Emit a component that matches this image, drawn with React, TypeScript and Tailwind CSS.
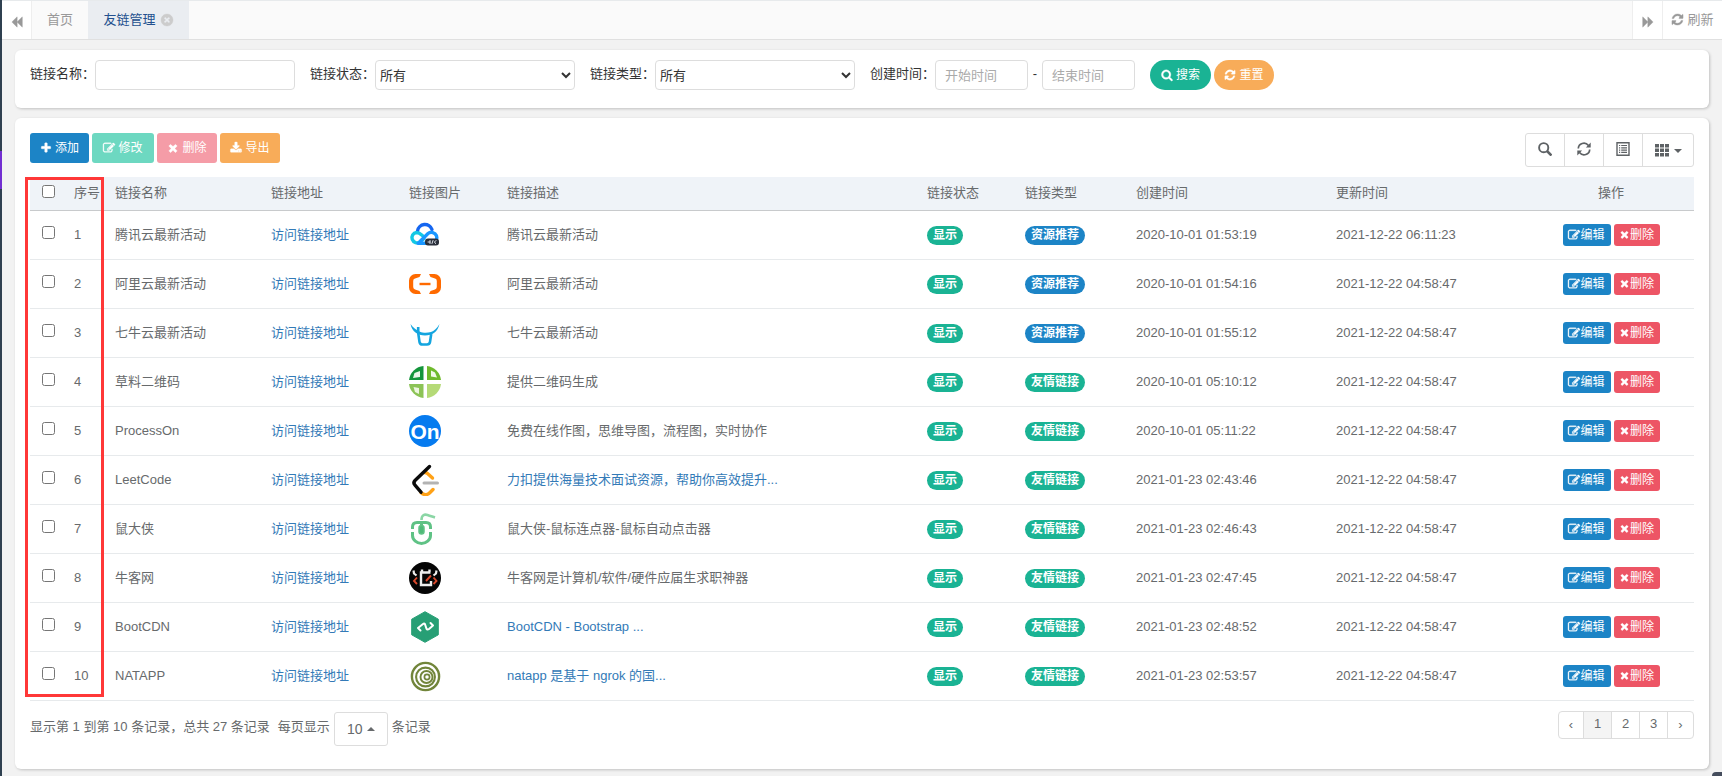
import { useState } from "react";

const FA = {
  edit: "M888 1184l116-116-152-152-116 116v56h96v96h56zm440-720q-16-16-33 1l-350 350q-17 17-1 33t33-1l350-350q17-17 1-33zm80 594v190q0 119-84.5 203.5t-203.5 84.5h-832q-119 0-203.5-84.5t-84.5-203.5v-832q0-119 84.5-203.5t203.5-84.5h832q63 0 117 25 15 7 18 23 3 17-9 29l-49 49q-14 14-32 8-23-6-45-6h-832q-66 0-113 47t-47 113v832q0 66 47 113t113 47h832q66 0 113-47t47-113v-126q0-13 9-22l64-64q15-15 35-7t20 29zm-96-738l288 288-672 672h-288v-288zm444 132l-92 92-288-288 92-92q28-28 68-28t68 28l152 152q28 28 28 68t-28 68z",
  times: "M1490 1322q0 40-28 68l-136 136q-28 28-68 28t-68-28l-294-294-294 294q-28 28-68 28t-68-28l-136-136q-28-28-28-68t28-68l294-294-294-294q-28-28-28-68t28-68l136-136q28-28 68-28t68 28l294 294 294-294q28-28 68-28t68 28l136 136q28 28 28 68t-28 68l-294 294 294 294q28 28 28 68z",
  plus: "M1600 736v192q0 40-28 68t-68 28h-416v416q0 40-28 68t-68 28h-192q-40 0-68-28t-28-68v-416h-416q-40 0-68-28t-28-68v-192q0-40 28-68t68-28h416v-416q0-40 28-68t68-28h192q40 0 68 28t28 68v416h416q40 0 68 28t28 68z",
  refresh: "M1639 1056q0 5-1 7-64 268-268 434.5t-478 166.5q-146 0-282.5-55t-243.5-157l-129 129q-19 19-45 19t-45-19-19-45v-448q0-26 19-45t45-19h448q26 0 45 19t19 45-19 45l-137 137q71 66 161 102t187 36q134 0 250-65t186-179q11-17 53-117 8-23 30-23h192q13 0 22.5 9.5t9.5 22.5zm25-800v448q0 26-19 45t-45 19h-448q-26 0-45-19t-19-45 19-45l138-138q-148-137-349-137-134 0-250 65t-186 179q-11 17-53 117-8 23-30 23h-199q-13 0-22.5-9.5t-9.5-22.5v-7q65-268 270-434.5t480-166.5q146 0 284 55.5t245 156.5l130-129q19-19 45-19t45 19 19 45z",
  search: "M1216 832q0-185-131.5-316.5t-316.5-131.5-316.5 131.5-131.5 316.5 131.5 316.5 316.5 131.5 316.5-131.5 131.5-316.5zm512 832q0 52-38 90t-90 38q-54 0-90-38l-343-342q-179 124-399 124-143 0-273.5-55.5t-225-150-150-225-55.5-273.5 55.5-273.5 150-225 225-150 273.5-55.5 273.5 55.5 225 150 150 225 55.5 273.5q0 220-124 399l343 343q37 37 37 90z",
  download: "M1344 1344q0-26-19-45t-45-19-45 19-19 45 19 45 45 19 45-19 19-45zm256 0q0-26-19-45t-45-19-45 19-19 45 19 45 45 19 45-19 19-45zm128-224v320q0 40-28 68t-68 28h-1472q-40 0-68-28t-28-68v-320q0-40 28-68t68-28h465l135 136q58 56 136 56t136-56l136-136h464q40 0 68 28t28 68zm-325-569q17 41-14 70l-448 448q-18 19-45 19t-45-19l-448-448q-31-29-14-70 17-39 59-39h256v-448q0-26 19-45t45-19h256q26 0 45 19t19 45v448h256q42 0 59 39z",
  timesCircle: "M1277 1122q0-26-19-45l-181-181 181-181q19-19 19-45 0-27-19-46l-90-90q-19-19-46-19-26 0-45 19l-181 181-181-181q-19-19-45-19-27 0-46 19l-90 90q-19 19-19 46 0 26 19 45l181 181-181 181q-19 19-19 45 0 27 19 46l90 90q19 19 46 19 26 0 45-19l181-181 181 181q19 19 45 19 27 0 46-19l90-90q19-19 19-46zm387-226q0 209-103 385.5t-279.5 279.5-385.5 103-385.5-103-279.5-279.5-103-385.5 103-385.5 279.5-279.5 385.5-103 385.5 103 279.5 279.5 103 385.5z",
  backward: "M1650 140q19-19 32-13t13 32v1472q0 26-13 32t-32-13l-710-710q-9-9-13-19v710q0 26-13 32t-32-13l-710-710q-19-19-19-45t19-45l710-710q19-19 32-13t13 32v710q4-10 13-19z",
};

function Icon({ name, className = "size-3" }: { name: keyof typeof FA; className?: string }) {
  return (
    <svg viewBox="0 0 1792 1792" fill="currentColor" stroke="currentColor" strokeWidth="50" aria-hidden="true" className={`shrink-0 overflow-visible ${className}`}>
      <path d={FA[name]} />
    </svg>
  );
}

const logos: Record<string, React.ReactNode> = {
  tencent: (
    <g fill="none" strokeWidth="3.4" strokeLinecap="round">
      <path d="M8.500 12a7.500 7.500 0 0 1 14.500-1.500" stroke="#1566f0" />
      <path d="M15 19.500l-4 3.500a5.200 5.200 0 1 1-3.500-9.500c3 0 4.500 2 7 4" stroke="#13c8e4" />
      <path d="M9 24.300h14a5.500 5.500 0 1 0-4-9.800l-8 8" stroke="#1996ff" />
      <rect x="16" y="19.500" width="14" height="7" rx="3" fill="#2a2f3a" stroke="none" />
      <path d="M19 23h2m0-1.500v3m3-3l-1 3m4-3l-1.500 1.500 1 1.500" stroke="#dfe3ea" strokeWidth="1" />
    </g>
  ),
  aliyun: (
    <g fill="#ff6a00">
      <path d="M12 6H6.500A6.500 6.500 0 0 0 0 12.500v7A6.500 6.500 0 0 0 6.500 26H12l-1.500-3-4.500-1.500a2.500 2.500 0 0 1-1.800-2.400v-6.200A2.500 2.500 0 0 1 6 10.500L10.500 9z" />
      <path d="M20 6h5.500a6.500 6.500 0 0 1 6.500 6.500v7a6.500 6.500 0 0 1-6.500 6.500H20l1.500-3 4.500-1.500a2.500 2.500 0 0 0 1.800-2.400v-6.200a2.500 2.500 0 0 0-1.800-2.400L21.500 9z" />
      <path d="M10.500 14.800h11v2.400h-11z" />
    </g>
  ),
  qiniu: (
    <g fill="none" stroke="#14a5df">
      <path d="M1.500 7c1.500 7.500 7 11.500 14.500 11.500S28.500 15 30.500 7c-2.500 4.500-5.500 7-8.500 8-4.500 1.300-8.500.8-11-.3-4-1.900-7-4-9.500-7.700z" fill="#14a5df" stroke="none" />
      <path d="M9.200 10v6l1.300 9q.4 2.500 3 2.500h4.500q2.600 0 3-2.500l1.200-8" strokeWidth="2.600" />
    </g>
  ),
  caoliao: (
    <g>
      <path d="M14.500 0A16 16 0 0 0 0 14h14.500z" fill="#13953b" />
      <path d="M18 0a16 16 0 0 1 14 14H18z" fill="#6fba2c" />
      <path d="M0 18h14.500v14A16 16 0 0 1 0 18z" fill="#8cc356" />
      <path d="M18 18h14a16 16 0 0 1-14 14z" fill="#b5da77" />
      <path d="M4 12l1.500-5L11 5v6z" fill="#e9f7e9" />
      <path d="M22 4.500l4 2 2 5-6-1z" fill="#f0f9e6" />
      <path d="M4.500 21l5.500 1v6l-4-2z" fill="#edf6df" />
    </g>
  ),
  processon: (
    <g>
      <circle cx="16" cy="16" r="16" fill="#067bef" />
      <text x="16" y="24" textAnchor="middle" fill="#fff" fontSize="21" fontWeight="700">On</text>
    </g>
  ),
  leetcode: (
    <g fill="none" strokeLinecap="round" strokeWidth="3.400">
      <path d="M15.500 8.500q1.500-.3 3 1l5 4.500" stroke="#ffa116" />
      <path d="M12 28.500c3 3 6.500 2.500 8.500.5l3.500-3.500" stroke="#ffa116" />
      <path d="M20.500 2.500L6 16.500q-2.200 2.300 0 4.700l6 7" stroke="#0b0b0b" />
      <path d="M15 19h13.500" stroke="#b3b3b3" strokeWidth="3" />
    </g>
  ),
  shudaxia: (
    <g fill="none" stroke="#5fc285" strokeWidth="3">
      <path d="M3.500 16v-2q0-4.500 4.500-4.500h9q4.500 0 4.500 4.500v2M3.500 19v3.500c0 4.500 4.500 8 9 8s9-3.500 9-8V19" />
      <path d="M12.500 7c0-5 3-6 6-5 2.500.8 4.500 1.500 7.500 2.500" stroke="#8bd6a5" strokeWidth="2.600" />
      <path d="M12.500 9v4" />
      <rect x="10" y="12.500" width="5" height="8.500" rx="2.500" fill="#4fba78" strokeWidth="1.500" />
    </g>
  ),
  nowcoder: (
    <g fill="none" strokeWidth="2">
      <circle cx="16" cy="16" r="16" fill="#050505" />
      <path d="M21.500 10.500h-9.500v12.500h10v-4M13 10V7.500M20.500 10V7.500" stroke="#eee" strokeWidth="2.400" />
      <path d="M4.500 8.500l.5 3 2.500 2M27.500 8.500l-.5 3-2.500 2" stroke="#eee" strokeWidth="2.200" />
      <path d="M8 15.500L5 19l3 3M24.500 15.500l3 3.500-3 3M22 13.500l-5 5.500" stroke="#d9482b" strokeWidth="1.900" />
    </g>
  ),
  bootcdn: (
    <g>
      <path d="M16 .7l13.300 7.500v15.600L16 31.300 2.700 23.800V8.200z" fill="#279f75" stroke="#279f75" strokeLinejoin="round" />
      <path d="M11.500 19.500L9 17l5-4q1.200-.8 2 .2l1.500 4.600q.8 1.500 2.500.2l4-3.500-2.500-2.500" fill="none" stroke="#fff" strokeWidth="2" strokeLinecap="round" strokeLinejoin="round" />
    </g>
  ),
  natapp: (
    <g fill="none" stroke="#71853a">
      <circle cx="16.500" cy="16.500" r="13.600" strokeWidth="2.400" />
      <circle cx="16.500" cy="17" r="9.400" strokeWidth="2.100" />
      <circle cx="17.500" cy="17" r="6" strokeWidth="1.900" />
      <circle cx="18" cy="17" r="2.600" strokeWidth="1.700" />
    </g>
  ),
};

const links = [
  { id: 1, name: "腾讯云最新活动", logo: "tencent", desc: "腾讯云最新活动", type: "资源推荐", created: "2020-10-01 01:53:19", updated: "2021-12-22 06:11:23" },
  { id: 2, name: "阿里云最新活动", logo: "aliyun", desc: "阿里云最新活动", type: "资源推荐", created: "2020-10-01 01:54:16", updated: "2021-12-22 04:58:47" },
  { id: 3, name: "七牛云最新活动", logo: "qiniu", desc: "七牛云最新活动", type: "资源推荐", created: "2020-10-01 01:55:12", updated: "2021-12-22 04:58:47" },
  { id: 4, name: "草料二维码", logo: "caoliao", desc: "提供二维码生成", type: "友情链接", created: "2020-10-01 05:10:12", updated: "2021-12-22 04:58:47" },
  { id: 5, name: "ProcessOn", logo: "processon", desc: "免费在线作图，思维导图，流程图，实时协作", type: "友情链接", created: "2020-10-01 05:11:22", updated: "2021-12-22 04:58:47" },
  { id: 6, name: "LeetCode", logo: "leetcode", desc: "力扣提供海量技术面试资源，帮助你高效提升...", more: true, type: "友情链接", created: "2021-01-23 02:43:46", updated: "2021-12-22 04:58:47" },
  { id: 7, name: "鼠大侠", logo: "shudaxia", desc: "鼠大侠-鼠标连点器-鼠标自动点击器", type: "友情链接", created: "2021-01-23 02:46:43", updated: "2021-12-22 04:58:47" },
  { id: 8, name: "牛客网", logo: "nowcoder", desc: "牛客网是计算机/软件/硬件应届生求职神器", type: "友情链接", created: "2021-01-23 02:47:45", updated: "2021-12-22 04:58:47" },
  { id: 9, name: "BootCDN", logo: "bootcdn", desc: "BootCDN - Bootstrap ...", more: true, type: "友情链接", created: "2021-01-23 02:48:52", updated: "2021-12-22 04:58:47" },
  { id: 10, name: "NATAPP", logo: "natapp", desc: "natapp 是基于 ngrok 的国...", more: true, type: "友情链接", created: "2021-01-23 02:53:57", updated: "2021-12-22 04:58:47" },
];

const columns = [
  { title: "序号", width: "w-[41px]" },
  { title: "链接名称", width: "w-[156px]" },
  { title: "链接地址", width: "w-[138px]" },
  { title: "链接图片", width: "w-[98px]" },
  { title: "链接描述", width: "" },
  { title: "链接状态", width: "w-[98px]" },
  { title: "链接类型", width: "w-[111px]" },
  { title: "创建时间", width: "w-[200px]" },
  { title: "更新时间", width: "w-[200px]" },
];

const field = "h-[30px] rounded border border-[#ddd] bg-white text-[13px] outline-none";
const card = "rounded-md bg-white shadow-[1px_1px_3px_rgba(0,0,0,0.2)]";
const toolBtn = "flex h-[30px] items-center justify-center gap-[3px] rounded-[3px] text-xs text-white";
const checkbox = "block size-[13px]";

function TabBar() {
  return (
    <nav className="flex h-10 border-t border-b border-t-[#e7eaec] border-b-[#e0e0e0] bg-[#fafafa] text-[#999]">
      <button aria-label="向左" className="flex w-[30px] items-center justify-center border-r border-[#eee] bg-white">
        <Icon name="backward" className="mt-1 size-3" />
      </button>
      <a href="#home" className="flex w-14 items-center justify-center pb-px">首页</a>
      <a href="#links" className="flex w-[101px] items-center justify-center gap-1 bg-[#eaedf1] pb-px text-[#23508e]">
        友链管理
        <Icon name="timesCircle" className="size-[14px] text-[#ccc]" />
      </a>
      <button aria-label="向右" className="ml-auto flex w-[31px] items-center justify-center border-x border-[#eee] bg-white">
        <Icon name="backward" className="mt-1 size-3 rotate-180" />
      </button>
      <button className="flex w-[59px] items-center justify-center gap-[3px] bg-white pb-px">
        <Icon name="refresh" className="size-[13px]" />
        刷新
      </button>
    </nav>
  );
}

function SearchForm() {
  return (
    <form className={`flex h-[58px] items-start gap-x-[15px] px-[15px] pt-[10px] text-[#333] ${card}`}>
      <div className="flex">
        <label htmlFor="name" className="w-[65px] pt-[5px]">链接名称：</label>
        <input id="name" type="text" className={`w-[200px] px-2 ${field}`} />
      </div>
      <div className="flex">
        <label htmlFor="status" className="w-[65px] pt-[5px]">链接状态：</label>
        <select id="status" className={`w-[200px] ${field}`}>
          <option>所有</option>
        </select>
      </div>
      <div className="flex">
        <label htmlFor="type" className="w-[65px] pt-[5px]">链接类型：</label>
        <select id="type" className={`w-[200px] ${field}`}>
          <option>所有</option>
        </select>
      </div>
      <div className="flex">
        <label htmlFor="begin" className="w-[65px] pt-[5px]">创建时间：</label>
        <input id="begin" type="text" placeholder="开始时间" className={`w-[93px] px-[9px] placeholder:text-[#aaa] ${field}`} />
        <span className="w-[14px] pt-[5px] text-center">-</span>
        <input type="text" aria-label="结束时间" placeholder="结束时间" className={`w-[93px] px-[9px] placeholder:text-[#aaa] ${field}`} />
      </div>
      <div className="flex gap-[3px] text-xs text-white">
        <button type="button" className="flex h-[30px] w-[61px] items-center justify-center gap-[3px] rounded-full bg-[#1ab394]">
          <Icon name="search" />
          搜索
        </button>
        <button type="reset" className="flex h-[30px] w-[60px] items-center justify-center gap-[3px] rounded-full bg-[#f8ac59]">
          <Icon name="refresh" />
          重置
        </button>
      </div>
    </form>
  );
}

function Toolbar() {
  return (
    <div className="flex items-start justify-between">
      <div className="flex gap-[3px]">
        <button className={`w-[59px] bg-[#1c84c6] ${toolBtn}`}><Icon name="plus" />添加</button>
        <button className={`w-[62px] bg-[#6dd8c1] ${toolBtn}`} disabled><Icon name="edit" />修改</button>
        <button className={`w-[60px] bg-[#f59ca7] ${toolBtn}`} disabled><Icon name="times" />删除</button>
        <button className={`w-[60px] bg-[#f8ac59] ${toolBtn}`}><Icon name="download" />导出</button>
      </div>
      <div className="flex h-[34px] divide-x divide-[#ddd] rounded-[3px] border border-[#ddd] text-[#5e6265]">
        <button aria-label="搜索" className="flex w-[39px] items-center justify-center pb-[2px]">
          <svg viewBox="0 0 14 14" className="size-[14px]" fill="none" stroke="currentColor">
            <circle cx="5.700" cy="5.700" r="4.600" strokeWidth="1.900" />
            <path d="M9 9l4.500 4.500" strokeWidth="2.600" />
          </svg>
        </button>
        <button aria-label="刷新" className="flex w-[39px] items-center justify-center pb-[2px]">
          <svg viewBox="0 0 14 14" className="size-[14px]" fill="none" stroke="currentColor" strokeWidth="1.700">
            <path d="M1.300 6.500C1.500 1.500 8-.8 11.500 3.500M12.700 7.500c-.2 5-6.700 7.300-10.200 3" />
            <path d="M13.700.5v5H8.900zM.3 13.500v-5h4.800z" fill="currentColor" stroke="none" />
          </svg>
        </button>
        <button aria-label="切换视图" className="flex w-[39px] items-center justify-center pb-[2px]">
          <svg viewBox="0 0 14 14" className="size-[14px]" fill="none" stroke="currentColor">
            <path d="M1 .7h12v12.600H1z" strokeWidth="1.400" />
            <path d="M3 3.500h1.200M3 5.800h1.200M3 8.100h1.200M3 10.400h1.200M5.200 3.500H11M5.200 5.800H11M5.200 8.100H11M5.200 10.400H11" strokeWidth="1.200" />
          </svg>
        </button>
        <button aria-label="列" className="flex w-[50px] items-center justify-center gap-[5px] pb-px">
          <svg viewBox="0 0 14 14" className="size-[14px]" fill="currentColor">
            <path d="M0 1h4v3.500H0zM5 1h4v3.500H5zM10 1h4v3.500h-4zM0 5.500h4V9H0zM5 5.500h4V9H5zM10 5.500h4V9h-4zM0 10h4v3.500H0zM5 10h4v3.500H5zM10 10h4v3.500h-4z" />
          </svg>
          <span className="mt-[3px] border-x-4 border-t-4 border-x-transparent border-t-current" />
        </button>
      </div>
    </div>
  );
}

function LinkTable() {
  return (
    <div className="relative mt-[10px]">
      <table className="w-full table-fixed border-collapse text-left">
        <thead>
          <tr className="h-[33px] border-b border-[#c8cacc] bg-[#eff3f8]">
            <th className="w-[36px] pl-3"><input type="checkbox" aria-label="全选" className={`mb-1 ${checkbox}`} /></th>
            {columns.map((col) => (
              <th key={col.title} className={`pl-2 font-normal whitespace-nowrap ${col.width}`}>{col.title}</th>
            ))}
            <th className="w-[166px] px-2 text-center font-normal">操作</th>
          </tr>
        </thead>
        <tbody>
          {links.map((link) => (
            <tr key={link.id} className="h-[49px] border-b border-[#e7eaec]">
              <td className="pl-3"><input type="checkbox" aria-label={link.name} className={`mb-1 ${checkbox}`} /></td>
              <td className="pl-2">{link.id}</td>
              <td className="pl-2">{link.name}</td>
              <td className="pl-2"><a href="#visit" className="text-[#337ab7]">访问链接地址</a></td>
              <td className="pl-2">
                <svg viewBox="0 0 32 32" className="size-8">{logos[link.logo]}</svg>
              </td>
              <td className="pl-2">
                {link.more ? <a href="#desc" className="text-[#337ab7]">{link.desc}</a> : link.desc}
              </td>
              <td className="pl-2">
                <span className="mt-px block w-9 rounded-full bg-[#1ab394] text-center text-xs leading-[19px] font-bold text-white">显示</span>
              </td>
              <td className="pl-2">
                <span className={`mt-px block w-[60px] rounded-full text-center text-xs leading-[19px] font-bold text-white ${link.type === "资源推荐" ? "bg-[#1c84c6]" : "bg-[#1ab394]"}`}>
                  {link.type}
                </span>
              </td>
              <td className="pl-2">{link.created}</td>
              <td className="pl-2">{link.updated}</td>
              <td>
                <div className="flex justify-center gap-[3px] text-xs text-white">
                  <a href="#edit" className="flex h-[22px] w-12 items-center justify-center rounded-[3px] bg-[#1c84c6]"><Icon name="edit" />编辑</a>
                  <a href="#remove" className="flex h-[22px] w-[46px] items-center justify-center rounded-[3px] bg-[#ed5565]"><Icon name="times" className="size-[11px]" />删除</a>
                </div>
              </td>
            </tr>
          ))}
        </tbody>
      </table>
      {/* highlighted columns */}
      <div className="pointer-events-none absolute top-0 bottom-1 -left-[5px] w-[79px] border-[3px] border-[#ff3838]" />
    </div>
  );
}

function Pagination() {
  const [page, setPage] = useState(1);
  return (
    <div className="flex items-start justify-between pt-[10px]">
      <div className="flex">
        <span className="pt-[7px]">显示第 1 到第 10 条记录，总共 27 条记录</span>
        <span className="ml-2 pt-[7px]">每页显示</span>
        <button className="mx-1 mt-px flex h-[34px] w-[54px] items-center justify-center gap-1 rounded-[3px] border border-[#ddd] text-sm">
          10
          <span className="border-x-4 border-b-4 border-x-transparent border-b-current" />
        </button>
        <span className="pt-[7px]">条记录</span>
      </div>
      <div className="flex h-7 divide-x divide-[#ddd] rounded border border-[#ddd]">
        <button className="w-[25px]" aria-label="上一页">‹</button>
        {[1, 2, 3].map((n) => (
          <button key={n} onClick={() => setPage(n)} className={`w-7 pb-px ${page === n ? "bg-[#f4f4f4]" : ""}`}>{n}</button>
        ))}
        <button className="w-[25px]" aria-label="下一页">›</button>
      </div>
    </div>
  );
}

export default function App() {
  return (
    <div className="relative flex min-h-screen overflow-hidden bg-[#f2f2f2] font-['Liberation_Sans','Noto_Sans_CJK_SC',sans-serif] text-[13px] leading-[18px] text-[#676a6c]">
      <div className="w-[2px] shrink-0 bg-[#2f4050] pt-[151px]">
        <div className="h-[38px] bg-[#722ed1]" />
      </div>
      <div className="flex min-w-0 flex-1 flex-col">
        <TabBar />
        <main className="flex flex-1 flex-col gap-[10px] pt-[10px] pr-[13px] pb-[7px] pl-[13px]">
          <SearchForm />
          <section className={`flex-1 px-[15px] pt-[15px] ${card}`}>
            <Toolbar />
            <LinkTable />
            <Pagination />
          </section>
        </main>
      </div>
      <div className="absolute right-0 bottom-0 h-1 w-[10px] rounded-tl-md bg-[#454d5d]" />
    </div>
  );
}
